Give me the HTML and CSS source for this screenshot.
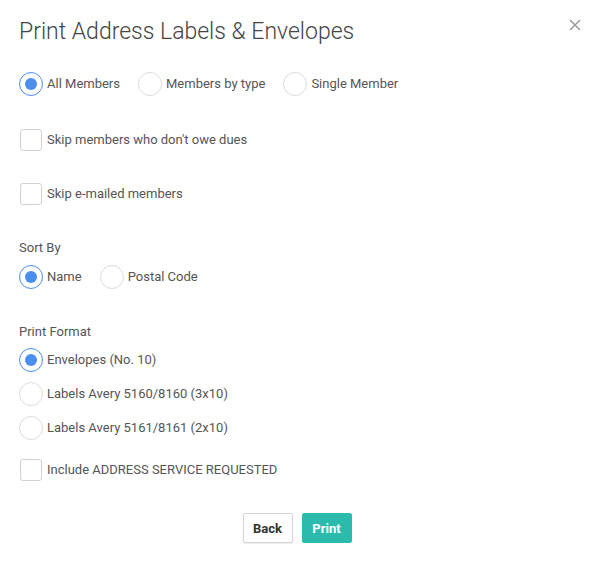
FILE: index.html
```html
<!DOCTYPE html>
<html>
<head>
<meta charset="utf-8">
<link rel="stylesheet" href="styles.css">
</head>
<body>
<div class="dialog">
  <div class="header">
    <h1 class="title">Print Address Labels &amp; Envelopes</h1>
    <button class="close" aria-label="Close">
      <svg width="12" height="12" viewBox="0 0 12 12"><path d="M1 1L11 11M11 1L1 11" stroke="#9a9a9a" stroke-width="1.5" fill="none"/></svg>
    </button>
  </div>

  <div class="row row-members">
    <label class="opt"><span class="radio checked"></span><span class="txt">All Members</span></label>
    <label class="opt"><span class="radio"></span><span class="txt">Members by type</span></label>
    <label class="opt"><span class="radio"></span><span class="txt">Single Member</span></label>
  </div>

  <label class="opt check1"><span class="checkbox"></span><span class="txt">Skip members who don't owe dues</span></label>
  <label class="opt check2"><span class="checkbox"></span><span class="txt">Skip e-mailed members</span></label>

  <div class="section-label sort-label">Sort By</div>
  <div class="row row-sort">
    <label class="opt"><span class="radio checked"></span><span class="txt">Name</span></label>
    <label class="opt"><span class="radio"></span><span class="txt">Postal Code</span></label>
  </div>

  <div class="section-label format-label">Print Format</div>
  <div class="col-format">
    <label class="opt"><span class="radio checked"></span><span class="txt">Envelopes (No. 10)</span></label>
    <label class="opt"><span class="radio"></span><span class="txt">Labels Avery 5160/8160 (3x10)</span></label>
    <label class="opt"><span class="radio"></span><span class="txt">Labels Avery 5161/8161 (2x10)</span></label>
  </div>

  <label class="opt check3"><span class="checkbox"></span><span class="txt">Include ADDRESS SERVICE REQUESTED</span></label>

  <div class="actions">
    <button class="btn btn-back">Back</button>
    <button class="btn btn-print">Print</button>
  </div>
</div>
</body>
</html>
```

FILE: styles.css
```css
* { box-sizing: border-box; }
html, body {
  margin: 0;
  padding: 0;
  background: #ffffff;
}
body {
  font-family: Roboto, "Liberation Sans", sans-serif;
  color: #555555;
  font-size: 13px;
}
.dialog {
  width: 600px;
  height: 567px;
  padding: 17px 20px 0 19px;
  display: flex;
  flex-direction: column;
  align-items: flex-start;
}
.header {
  width: 100%;
  display: flex;
  justify-content: space-between;
  align-items: flex-start;
}
.title {
  margin: 0;
  font-size: 23px;
  font-weight: 300;
  line-height: 30px;
  color: #444444;
}
.close {
  border: 0;
  background: none;
  padding: 0;
  margin: 2px -1px 0 0;
  width: 12px;
  height: 12px;
  display: flex;
  cursor: pointer;
}
.row {
  display: flex;
  align-items: center;
}
.opt {
  display: flex;
  align-items: center;
  gap: 4px;
  line-height: 18px;
  cursor: pointer;
}
.txt { white-space: nowrap; }
.radio {
  width: 24px;
  height: 24px;
  border-radius: 50%;
  border: 1px solid #dcdcdc;
  background: #fff;
  display: flex;
  align-items: center;
  justify-content: center;
  flex: none;
}
.radio.checked {
  border-color: #4a8ef0;
}
.radio.checked::after {
  content: "";
  width: 12px;
  height: 12px;
  border-radius: 50%;
  background: #4a8ef0;
}
.checkbox {
  width: 22px;
  height: 22px;
  margin: 0 1px;
  border: 1px solid #d2d2d2;
  border-radius: 3px;
  background: #fff;
  flex: none;
}
.row-members { margin-top: 25px; gap: 17px; }
.row-members .opt + .opt { margin-left: 1px; }
.check1 { margin-top: 33px; }
.check2 { margin-top: 32px; }
.section-label { line-height: 18px; }
.sort-label { margin-top: 34px; }
.row-sort { margin-top: 8px; gap: 18px; }
.format-label { margin-top: 34px; }
.col-format {
  margin-top: 7px;
  display: flex;
  flex-direction: column;
  gap: 10px;
}
.check3 { margin-top: 19px; }
.actions {
  width: 100%;
  margin-top: 32px;
  display: flex;
  justify-content: center;
  gap: 9px;
  padding-right: 5px;
}
.btn {
  height: 30px;
  width: 50px;
  font-family: Roboto, "Liberation Sans", sans-serif;
  font-size: 13px;
  font-weight: 700;
  border-radius: 2px;
  padding: 0;
  cursor: pointer;
}
.btn-back {
  background: #fff;
  color: #333;
  border: 1px solid #d6d6d6;
  box-shadow: 0 1px 1px rgba(0,0,0,0.08);
}
.btn-print {
  background: #2bbbad;
  color: #fff;
  border: 1px solid #2bbbad;
}
```
